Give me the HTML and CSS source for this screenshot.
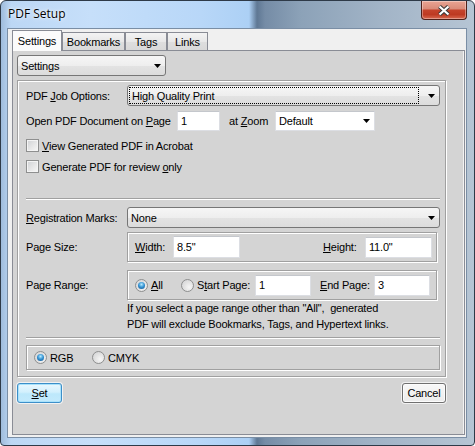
FILE: index.html
```html
<!DOCTYPE html>
<html>
<head>
<meta charset="utf-8">
<link rel="stylesheet" href="styles.css">
</head>
<body>
<div class="window">
  <div class="titlebar">
    <span class="title">PDF Setup</span>
    <div class="close">
      <svg width="14" height="11" viewBox="0 0 14 11">
        <path d="M2.5 1.5 L11.5 9.5 M11.5 1.5 L2.5 9.5" stroke="#3b3b3b" stroke-width="4.2" fill="none"/>
        <path d="M2.5 1.5 L11.5 9.5 M11.5 1.5 L2.5 9.5" stroke="#ffffff" stroke-width="2.2" fill="none"/>
      </svg>
    </div>
  </div>
  <div class="client">
    <div class="tabs">
      <div class="tab tab-sel t-settings">Settings</div>
      <div class="tab t-book">Bookmarks</div>
      <div class="tab t-tags">Tags</div>
      <div class="tab t-links">Links</div>
    </div>
    <div class="panel">
      <div class="combo combo-settings"><span class="txt">Settings</span><svg class="arr" width="7" height="4" viewBox="0 0 7 4"><path d="M0 0H7L3.5 4Z"/></svg></div>
      <div class="box">
        <div class="row r-job">
          <span class="lbl">PDF <u>J</u>ob Options:</span>
          <div class="combo combo-job"><span class="focus">High Quality Print</span><svg class="arr" width="7" height="4" viewBox="0 0 7 4"><path d="M0 0H7L3.5 4Z"/></svg></div>
        </div>
        <div class="row r-open">
          <span class="lbl-open">Open PDF Document on <u>P</u>age</span>
          <span class="edit w-page">1</span>
          <span class="lbl-zoom">at <u>Z</u>oom</span>
          <div class="dd dd-zoom"><span class="txt">Default</span><svg class="arr" width="7" height="4" viewBox="0 0 7 4"><path d="M0 0H7L3.5 4Z"/></svg></div>
        </div>
        <div class="row r-check r-check1"><span class="chk"></span><span><u>V</u>iew Generated PDF in Acrobat</span></div>
        <div class="row r-check"><span class="chk"></span><span>Generate PDF for review <u>o</u>nly</span></div>
        <div class="sep sep1"></div>
        <div class="row r-reg">
          <span class="lbl"><u>R</u>egistration Marks:</span>
          <div class="combo combo-reg"><span class="txt">None</span><svg class="arr" width="7" height="4" viewBox="0 0 7 4"><path d="M0 0H7L3.5 4Z"/></svg></div>
        </div>
        <div class="row r-size">
          <span class="lbl">Page Size:</span>
          <div class="group g-size">
            <span class="lbl-w"><u>W</u>idth:</span>
            <span class="edit w-size">8.5"</span>
            <span class="lbl-h"><u>H</u>eight:</span>
            <span class="edit h-size">11.0"</span>
          </div>
        </div>
        <div class="row r-range">
          <span class="lbl">Page Range:</span>
          <div class="group g-range">
            <span class="radio on"></span><span class="lbl-all"><u>A</u>ll</span>
            <span class="radio"></span><span class="lbl-start">S<u>t</u>art Page:</span>
            <span class="edit w-range">1</span>
            <span class="lbl-end"><u>E</u>nd Page:</span>
            <span class="edit w-range">3</span>
          </div>
        </div>
        <div class="note">If you select a page range other than "All",&nbsp; generated<br>PDF will exclude Bookmarks, Tags, and Hypertext links.</div>
        <div class="sep sep2"></div>
        <div class="group g-color">
          <span class="radio on"></span><span class="lbl-rgb">RGB</span>
          <span class="radio"></span><span>CMYK</span>
        </div>
      </div>
      <div class="buttons">
        <div class="btn btn-set"><span><u>S</u>et</span></div>
        <div class="btn btn-cancel"><span>Cancel</span></div>
      </div>
    </div>
  </div>
</div>
</body>
</html>
```

FILE: styles.css
```css
html, body {
  margin: 0;
  padding: 0;
  background: #ffffff;
}

.window {
  width: 475px;
  height: 446px;
  box-sizing: border-box;
  border: 1px solid #2e3a48;
  border-radius: 6px 6px 4px 4px;
  background: linear-gradient(to right, #9fbcdc 0px, #bcd7f4 10px, #c6dffa 90px, #b8d7f8 200px, #acd0f5 248px, #5f7894 256px, #758ca6 264px, #8ca2b8 300px, #a2b4c7 380px, #b6c5d4 474px);
  padding: 0 7px 7px 6px;
  display: flex;
  flex-direction: column;
  font-family: "Liberation Sans", Arial, sans-serif;
  font-size: 11px;
  letter-spacing: -0.18px;
  color: #000;
  overflow: hidden;
}

.titlebar {
  height: 27px;
  flex: none;
  display: flex;
  align-items: flex-start;
  justify-content: space-between;
  margin-left: -6px;
  margin-right: -7px;
}

.title {
  font-family: "Open Sans", "Noto Sans", sans-serif;
  font-size: 12px;
  letter-spacing: 0;
  line-height: 16px;
  padding: 5px 0 0 7px;
  color: #000;
  text-shadow: 0 0 5px rgba(255,255,255,0.9), 0 0 2px rgba(255,255,255,0.9);
}

.close {
  width: 46px;
  height: 19px;
  box-sizing: border-box;
  margin-right: 7px;
  border: 1px solid #4f211a;
  border-top: none;
  border-radius: 0 0 4px 4px;
  background: linear-gradient(#e9a493 0%, #da8c7a 42%, #c4432b 52%, #bd3a22 75%, #d8684f 100%);
  box-shadow: inset 0 0 0 1px rgba(255,255,255,0.35);
  display: flex;
  align-items: center;
  justify-content: center;
}

.client {
  width: 460px;
  height: 410px;
  box-sizing: border-box;
  border: 1px solid #7a8ea5;
  background: #f0f0f0;
  padding: 1px 1px 2px 4px;
  display: flex;
  flex-direction: column;
}

.tabs {
  height: 20px;
  flex: none;
  display: flex;
  align-items: flex-end;
}

.tab {
  height: 18px;
  box-sizing: border-box;
  border: 1px solid #898c95;
  border-bottom: none;
  background: linear-gradient(#f3f3f3, #e8e8e8 50%, #dedede 51%, #d9d9d9);
  display: flex;
  align-items: center;
  justify-content: center;
  padding-top: 1px;
}

.tab-sel {
  height: 21px;
  margin-bottom: -1px;
  background: #fbfbfb;
  position: relative;
  z-index: 1;
  padding-top: 0;
  padding-bottom: 1px;
}

.t-settings { width: 50px; }
.t-book { width: 63px; }
.t-tags { width: 42px; }
.t-links { width: 41px; }

.panel {
  width: 453px;
  height: 385px;
  box-sizing: border-box;
  border: 1px solid #898c95;
  background: #d4d4d4;
  box-shadow: inset -1px 0 0 #f2f2f2;
  padding: 4px 0 0 4px;
  display: flex;
  flex-direction: column;
}

.combo {
  height: 21px;
  box-sizing: border-box;
  border: 1px solid #767676;
  border-radius: 3px;
  background: linear-gradient(#f6f6f6 0%, #eeeeee 50%, #e3e3e3 51%, #dcdcdc 100%);
  display: flex;
  align-items: center;
  padding: 0 4px 0 3px;
}

.combo .txt, .dd .txt {
  flex: 1;
}

.arr {
  flex: none;
  fill: #000;
}

.combo-settings {
  width: 149px;
  flex: none;
}

.box {
  width: 429px;
  height: 297px;
  flex: none;
  box-sizing: border-box;
  margin-top: 4px;
  border: 1px solid #a0a0a0;
  box-shadow: inset 1px 1px 0 #ffffff, 1px 1px 0 #ffffff;
  padding: 4px 5px 0 8px;
  display: flex;
  flex-direction: column;
}

.row {
  display: flex;
  align-items: center;
  flex: none;
}

.lbl {
  width: 101px;
  flex: none;
}

.r-job { height: 21px; }

.combo-job {
  flex: 1;
  padding-left: 1px;
}

.focus {
  flex: 1;
  height: 17px;
  box-sizing: border-box;
  border: 1px dotted #000;
  margin-right: 9px;
  padding-left: 2px;
  display: flex;
  align-items: center;
}

.r-open {
  height: 20px;
  margin-top: 5px;
}

.lbl-open { width: 151px; flex: none; }

.edit {
  box-sizing: border-box;
  height: 20px;
  background: #ffffff;
  border: 1px solid #dcdee3;
  border-top-color: #c4c7cc;
  display: flex;
  align-items: center;
  padding-left: 3px;
  flex: none;
}

.w-page { width: 43px; }

.lbl-zoom {
  width: 46px;
  margin-left: 9px;
  flex: none;
}

.dd {
  height: 20px;
  box-sizing: border-box;
  background: #ffffff;
  border: 1px solid #dcdee3;
  border-top-color: #c4c7cc;
  display: flex;
  align-items: center;
  padding: 0 4px 0 3px;
}

.dd-zoom { width: 100px; }

.r-check { height: 21px; }
.r-check1 { margin-top: 4px; }

.chk {
  width: 13px;
  height: 13px;
  box-sizing: border-box;
  border: 1px solid #8e8f8f;
  background: linear-gradient(135deg, #cfd1d4 0%, #e9e9e9 60%, #f7f7f7 100%);
  box-shadow: inset 0 0 0 1px #f4f4f4;
  margin-right: 3px;
  flex: none;
}

.sep {
  height: 0;
  border-top: 1px solid #a0a0a0;
  border-bottom: 1px solid #ffffff;
  flex: none;
}

.sep1 { margin-top: 21px; }
.sep2 { margin-top: 5px; }

.r-reg {
  height: 21px;
  margin-top: 7px;
}

.combo-reg { flex: 1; }

.group {
  box-sizing: border-box;
  border: 1px solid #a0a0a0;
  box-shadow: inset 1px 1px 0 #ffffff, 1px 1px 0 #ffffff;
  display: flex;
  align-items: center;
  padding: 0 4px 0 7px;
  flex: none;
}

.g-size, .g-range {
  width: 310px;
  height: 30px;
}

.r-size { margin-top: 4px; }
.r-range { margin-top: 8px; }

.lbl-w { width: 38px; flex: none; }
.w-size { width: 67px; height: 22px; }
.lbl-h { width: 42px; margin-left: auto; flex: none; }
.h-size { width: 67px; height: 21px; }

.radio {
  width: 13px;
  height: 13px;
  box-sizing: border-box;
  border-radius: 50%;
  border: 1px solid #8e8f8f;
  background: radial-gradient(circle at 65% 65%, #f6f6f6 0%, #e4e4e4 45%, #cfd0d2 100%);
  margin-right: 3px;
  flex: none;
  display: flex;
  align-items: center;
  justify-content: center;
}

.radio.on::after {
  content: "";
  width: 7px;
  height: 7px;
  border-radius: 50%;
  background: radial-gradient(circle at 50% 35%, #b8ebff 0%, #3a98d6 45%, #0e4f8c 100%);
}

.lbl-all { width: 30px; flex: none; }
.lbl-start { width: 58px; flex: none; }
.w-range { width: 56px; height: 21px; }
.lbl-end { width: 54px; margin-left: 9px; flex: none; }

.note {
  margin-left: 101px;
  line-height: 16px;
  flex: none;
}

.g-color {
  height: 25px;
  margin-top: 6px;
}

.lbl-rgb { width: 42px; flex: none; }

.buttons {
  width: 429px;
  margin-top: 6px;
  display: flex;
  justify-content: space-between;
  flex: none;
}

.btn {
  height: 20px;
  box-sizing: border-box;
  border-radius: 3px;
  display: flex;
  align-items: center;
  justify-content: center;
}

.btn-set {
  width: 45px;
  border: 1px solid #3c8fc9;
  background: linear-gradient(#eaf8fe 0%, #d2f0fd 45%, #bde8fb 55%, #c3eafc 100%);
  box-shadow: 0 0 0 1px #f2f2f2, inset 0 0 0 1px #a9e2fb;
}

.btn-cancel {
  width: 44px;
  border: 1px solid #707070;
  background: linear-gradient(#f8f8f8, #ececec);
  box-shadow: 0 0 0 1px #f2f2f2, inset 0 0 0 1px #fcfcfc;
}
```
